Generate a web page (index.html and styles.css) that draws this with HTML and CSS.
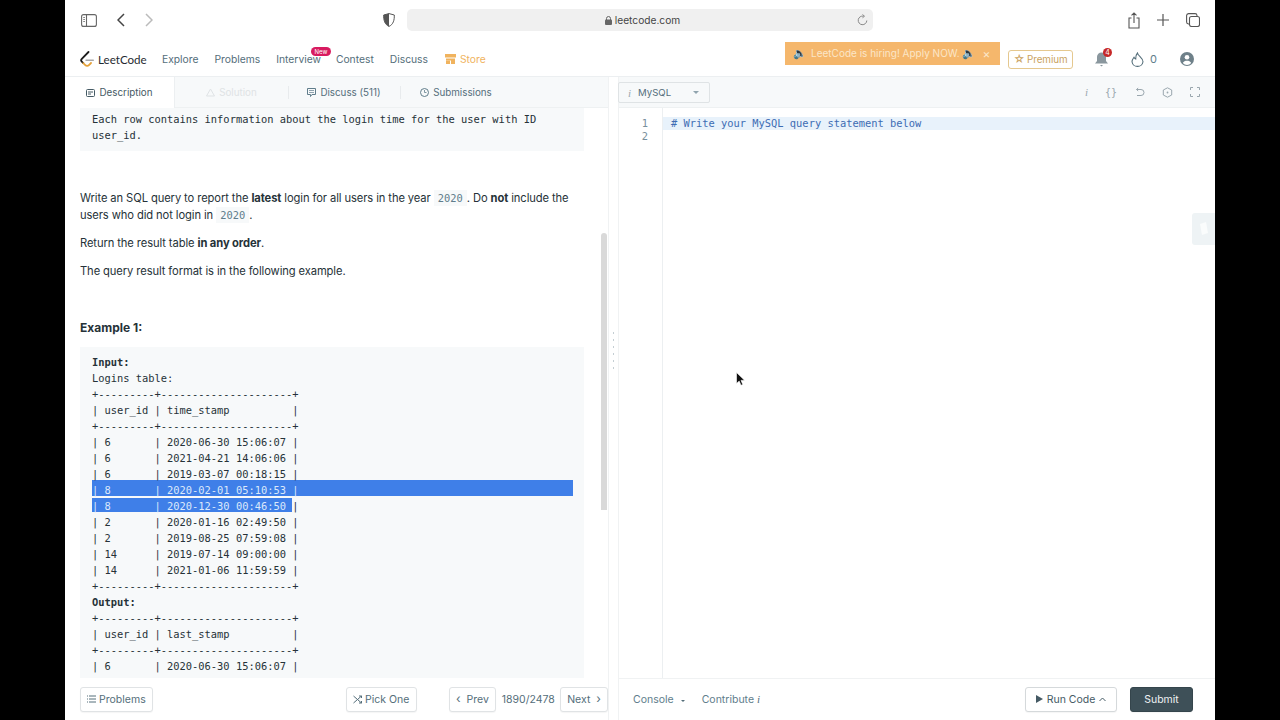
FILE: index.html
```html
<!DOCTYPE html>
<html lang="en">
<head>
<meta charset="utf-8">
<title>LeetCode</title>
<link rel="stylesheet" href="styles.css">
</head>
<body>
<div class="app">
  <header class="browser">
    <div class="browser-left">
      <svg class="sidebar" width="16" height="13" viewBox="0 0 16 13"><rect x=".6" y=".6" width="14.8" height="11.8" rx="2" fill="none" stroke="#666" stroke-width="1.1"/><path d="M5.5 1v11" stroke="#666" stroke-width="1.1"/><path d="M2.2 3.5h1.8M2.2 5.5h1.8M2.2 7.5h1.8" stroke="#888"/></svg>
      <svg class="back" width="8" height="14" viewBox="0 0 8 14"><path d="M7 1 1 7l6 6" fill="none" stroke="#444" stroke-width="1.5"/></svg>
      <svg class="forward" width="8" height="14" viewBox="0 0 8 14"><path d="m1 1 6 6-6 6" fill="none" stroke="#bbb" stroke-width="1.5"/></svg>
    </div>
    <svg class="shield" width="12" height="14" viewBox="0 0 12 14"><path d="M6 .6 11.3 2c.2 5-1 9.500-5.300 11.400C1.700 11.500.5 7 .7 2Z" fill="#fff" stroke="#555"/><path d="M6 .6v12.800C1.700 11.500.5 7 .7 2Z" fill="#555"/></svg>
    <div class="url">
      <span class="url-text"><svg width="7" height="9" viewBox="0 0 7 9"><rect y="3.500" width="7" height="5.500" rx="1" fill="#666"/><path d="M1.500 4V2.500a2 2 0 0 1 4 0V4" fill="none" stroke="#666"/></svg>leetcode.com</span>
      <svg class="reload" width="11" height="12" viewBox="0 0 11 12"><path d="M6.500 2.200A4.300 4.300 0 1 0 9.800 6.500M5.500.5l2 1.700-2 1.600" fill="none" stroke="#888"/></svg>
    </div>
    <div class="browser-right">
      <svg width="12" height="17" viewBox="0 0 12 17"><path d="M3.500 6H1v10h10V6H8.500M6 11V1M3.500 3.300 6 1l2.500 2.300" fill="none" stroke="#555" stroke-width="1.1"/></svg>
      <svg width="12" height="12" viewBox="0 0 12 12"><path d="M6 0v12M0 6h12" stroke="#555" stroke-width="1.2"/></svg>
      <svg width="14" height="14" viewBox="0 0 14 14"><rect x="3.500" y="3.500" width="10" height="10" rx="2" fill="none" stroke="#555" stroke-width="1.1"/><path d="M3 11H2.500A2 2 0 0 1 .6 9V2.500A2 2 0 0 1 2.500.6H9A2 2 0 0 1 11 2.500V3" fill="none" stroke="#555" stroke-width="1.1"/></svg>
    </div>
  </header>

  <nav class="nav">
    <div class="brand">
      <svg class="logo" width="14" height="17" viewBox="0 0 14 17"><path d="M8.500 1 1.800 7.800a2 2 0 0 0 0 2.800l1.500 1.500" fill="none" stroke="#1c1c1c" stroke-width="1.800" stroke-linecap="round"/><path d="M6 9.200h7.300" stroke="#a8a8a8" stroke-width="1.400" stroke-linecap="round"/><path d="M3.300 12.100 5 13.800a3 3 0 0 0 4.200 0l1.800-1.800" fill="none" stroke="#e5a23a" stroke-width="1.800" stroke-linecap="round"/></svg>
      <span class="brand-name">LeetCode</span>
    </div>
    <a>Explore</a>
    <a>Problems</a>
    <a class="interview">Interview<span class="new-badge">New</span></a>
    <a>Contest</a>
    <a>Discuss</a>
    <a class="store"><svg width="11" height="10" viewBox="0 0 11 10"><path d="M0 0h11v3.500H0zM1 4.500h9V10H6V6.500H1z" fill="#f0b35e"/><path d="M1 6.500h4V10H1z" fill="#f0b35e"/></svg>Store</a>
    <div class="nav-right">
      <button class="premium"><span class="star">☆</span>Premium</button>
      <span class="bell"><svg width="15" height="16" viewBox="0 0 15 16"><path d="M7.500 1.500a4.500 4.500 0 0 1 4.500 4.500v4l2 2.500H1L3 10V6a4.500 4.500 0 0 1 4.500-4.500Z" fill="#8a979e"/><path d="M6 14h3l-1.500 1.500Z" fill="#8a979e"/></svg><span class="bell-count">4</span></span>
      <span class="fire"><svg width="13" height="15" viewBox="0 0 13 15"><path d="M6.500 1C7 4 12 6 12 9.700A5.400 5.400 0 0 1 6.500 14.400 5.400 5.400 0 0 1 1 9.700C1 7.700 2.300 6.300 3 5.300c.5 1 1 1.400 1.700 1.700C4.700 4.700 5 2.500 6.500 1Z" fill="none" stroke="#546e7a" stroke-width="1.100"/></svg>0</span>
      <svg class="avatar" width="14" height="14" viewBox="0 0 14 14"><circle cx="7" cy="7" r="7" fill="#6e8089"/><circle cx="7" cy="5.300" r="2.300" fill="#fff"/><path d="M2.800 11c.8-1.700 2.400-2.300 4.200-2.300s3.400.6 4.200 2.300A5.800 5.800 0 0 1 7 13a5.800 5.800 0 0 1-4.200-2Z" fill="#fff"/></svg>
    </div>
    <div class="banner"><span class="horn">🔈</span><span class="banner-text">LeetCode is hiring! Apply NOW.</span><span class="horn">🔈</span><span class="banner-x">×</span></div>
  </nav>

  <main class="split">
    <section class="left">
      <div class="tabs">
        <div class="tab active"><svg width="9" height="8" viewBox="0 0 9 8"><rect x=".5" y=".5" width="8" height="7" rx="1" fill="none" stroke="#455a64"/><path d="M2 3h5M2 5h3" stroke="#455a64"/></svg>Description</div>
        <div class="tab disabled"><svg width="9" height="9" viewBox="0 0 9 9"><path d="M4.500 1 8.500 8H.5Z" fill="none" stroke="#dfe3e5"/></svg>Solution</div>
        <div class="tab"><svg width="9" height="9" viewBox="0 0 9 9"><path d="M.5.500h8v6H5L3.500 8.500v-2h-3Z" fill="none" stroke="#607d8b"/><path d="M2 2.500h5M2 4.500h5" stroke="#607d8b" stroke-width=".7"/></svg>Discuss (511)</div>
        <div class="tab"><svg width="9" height="9" viewBox="0 0 9 9"><circle cx="4.500" cy="4.500" r="4" fill="none" stroke="#607d8b"/><path d="M4.500 2v2.500h2" fill="none" stroke="#607d8b" stroke-width=".8"/></svg>Submissions</div>
      </div>
      <div class="content">
        <div class="scrollbar"></div>
        <pre class="code first">Each row contains information about the login time for the user with ID
user_id.</pre>
        <p class="para first-para">Write an SQL query to report the <b>latest</b> login for all users in the year <code>2020</code>. Do <b>not</b> include the users who did not login in <code>2020</code>.</p>
        <p class="para">Return the result table <b>in any order</b>.</p>
        <p class="para">The query result format is in the following example.</p>
        <p class="example">Example 1:</p>
        <pre class="code second"><b>Input:</b>
Logins table:
+---------+---------------------+
| user_id | time_stamp          |
+---------+---------------------+
| 6       | 2020-06-30 15:06:07 |
| 6       | 2021-04-21 14:06:06 |
| 6       | 2019-03-07 00:18:15 |
<span class="sel-row">| 8       | 2020-02-01 05:10:53 |</span><span class="sel-row short">| 8       | 2020-12-30 00:46:50 <span class="plain">|</span></span>| 2       | 2020-01-16 02:49:50 |
| 2       | 2019-08-25 07:59:08 |
| 14      | 2019-07-14 09:00:00 |
| 14      | 2021-01-06 11:59:59 |
+---------+---------------------+
<b>Output:</b>
+---------+---------------------+
| user_id | last_stamp          |
+---------+---------------------+
| 6       | 2020-06-30 15:06:07 |</pre>
      </div>
      <footer class="left-foot">
        <button class="btn problems"><svg width="9" height="8" viewBox="0 0 9 8"><path d="M0 1h1M2 1h7M0 4h1M2 4h7M0 7h1M2 7h7" stroke="#546e7a"/></svg>Problems</button>
        <button class="btn pick"><svg width="9" height="9" viewBox="0 0 9 9"><path d="m.5 1 8 7M.5 8l8-7M6 1h2.500v2M6 8h2.500V6" fill="none" stroke="#546e7a"/></svg>Pick One</button>
        <button class="btn prev"><span class="chev">‹</span>Prev</button>
        <span class="count">1890/2478</span>
        <button class="btn next">Next<span class="chev">›</span></button>
      </footer>
    </section>

    <div class="handle"><span></span><span></span><span></span><span></span><span></span><span></span></div>

    <section class="right">
      <div class="editor-bar">
        <div class="lang"><i class="info">i</i><span class="lang-name">MySQL</span><span class="caret"></span></div>
        <div class="tools">
          <i class="info">i</i>
          <span class="braces">{}</span>
          <svg width="11" height="10" viewBox="0 0 11 10"><path d="M2.500 2.500H7a3 3 0 0 1 0 6H3M2.500 2.500 4.200 1M2.500 2.500 4.200 4" fill="none" stroke="#9aa7ae"/></svg>
          <svg width="11" height="11" viewBox="0 0 11 11"><path d="M5.500.8 9.700 3v5L5.500 10.200 1.300 8V3Z" fill="none" stroke="#9aa7ae"/><circle cx="5.500" cy="5.500" r=".9" fill="#9aa7ae"/></svg>
          <svg width="10" height="10" viewBox="0 0 10 10"><path d="M.5 3V.5H3M7 .5h2.500V3M9.500 7v2.500H7M3 9.500H.5V7" fill="none" stroke="#9aa7ae"/></svg>
        </div>
      </div>
      <div class="editor">
        <div class="gutter"><span>1</span><span>2</span></div>
        <div class="lines">
          <div class="line current"># Write your MySQL query statement below</div>
          <div class="line"></div>
        </div>
        <div class="side-tab"><svg width="12" height="16" viewBox="0 0 12 16"><path d="M2 3l6-2 2 11-6 2z" fill="#fafcfc"/></svg></div>
      </div>
      <footer class="right-foot">
        <span class="link">Console<span class="caret small"></span></span>
        <span class="link">Contribute <i class="info dark">i</i></span>
        <button class="btn run"><svg width="7" height="8" viewBox="0 0 7 8"><path d="M0 0v8l7-4Z" fill="#455a64"/></svg>Run Code<svg width="7" height="5" viewBox="0 0 7 5"><path d="m.5 4 3-3 3 3" fill="none" stroke="#455a64"/></svg></button>
        <button class="btn submit">Submit</button>
      </footer>
    </section>
  </main>

  <svg class="cursor" width="9" height="14" viewBox="0 0 9 14"><path d="M.5.500v11l2.700-2.400 1.800 4.200 1.800-.8-1.800-4.100 3.500-.2Z" fill="#111" stroke="#fff" stroke-width=".6"/></svg>
</div>
</body>
</html>
```
FILE: styles.css
```css
* { box-sizing: border-box; }
html, body { margin: 0; height: 100%; overflow: hidden; background: #000; }
body { font-family: Inter, "Liberation Sans", sans-serif; color: #263238; }
button { font: inherit; }
p { margin: 0; }

.app {
  position: relative;
  width: 1150px;
  height: 720px;
  margin: 0 auto;
  background: #fff;
  display: flex;
  flex-direction: column;
  overflow: hidden;
}

.browser {
  height: 40px;
  flex: none;
  display: flex;
  align-items: center;
  padding: 0 15px 0 16px;
}
.browser-left { display: flex; align-items: center; width: 299px; flex: none; }
.back { margin-left: 20px; }
.forward { margin-left: 20px; }
.shield { flex: none; margin-left: 3px; }
.url {
  width: 466px;
  height: 22px;
  margin-left: 12px;
  border-radius: 5px;
  background: #f0f0f0;
  display: flex;
  align-items: center;
  justify-content: center;
  position: relative;
  font-size: 10.200px;
  color: #444;
}
.url-text { display: flex; align-items: center; gap: 3px; margin-left: 5px; }
.reload { position: absolute; right: 5px; top: 5px; }
.browser-right { margin-left: auto; display: flex; align-items: center; gap: 17px; }

.nav {
  position: relative;
  height: 37px;
  flex: none;
  display: flex;
  align-items: center;
  gap: 16px;
  padding: 2px 21px 0 15px;
  border-bottom: 1px solid #eceff1;
  font-size: 10.300px;
  color: #546e7a;
}
.brand { display: flex; align-items: center; gap: 4px; width: 66px; white-space: nowrap; }
.logo { flex: none; }
.brand-name { font-family: Lato, sans-serif; font-size: 11.600px; color: #1f2a30; font-weight: 400; }
.interview { position: relative; margin-right: -1px; }
.new-badge {
  position: absolute;
  right: -10px;
  top: -6px;
  width: 20px;
  height: 9px;
  border-radius: 5px;
  background: #d81b60;
  color: #fff;
  font-size: 6px;
  line-height: 9px;
  text-align: center;
}
.store { display: flex; align-items: center; gap: 4px; color: #f0b35e; margin-left: 1px; }
.nav-right { margin-left: auto; display: flex; align-items: center; }
.premium {
  width: 65px;
  height: 19px;
  padding: 0;
  border: 1px solid #e5c88f;
  border-radius: 3px;
  background: #fff;
  color: #c9a15d;
  font-size: 9.800px;
  display: flex;
  align-items: center;
  justify-content: center;
  gap: 2px;
}
.star { font-size: 11px; }
.bell { position: relative; display: flex; margin-left: 21px; }
.bell-count {
  position: absolute;
  left: 9px;
  top: -3px;
  width: 9px;
  height: 9px;
  border-radius: 50%;
  background: #c62828;
  color: #fff;
  font-size: 7px;
  line-height: 9px;
  text-align: center;
}
.fire { display: flex; align-items: center; gap: 6px; margin-left: 22px; font-size: 11px; color: #607d8b; }
.avatar { margin-left: 23px; }
.banner {
  position: absolute;
  left: 720px;
  top: 2px;
  width: 215px;
  height: 23px;
  background: #f5b76c;
  color: #fbe6c8;
  font-size: 10px;
  display: flex;
  align-items: center;
  padding: 0 0 1px 8px;
}
.horn { font-size: 11px; font-family: "DejaVu Sans", sans-serif; color: #6f7b80; width: 14px; flex: none; }
.banner-text { margin-left: 4px; margin-right: 2px; white-space: nowrap; }
.banner-x { margin-left: 7px; font-size: 12px; color: #fbe6c8; }

.split { flex: 1; min-height: 0; display: flex; }
.left { width: 544px; flex: none; display: flex; flex-direction: column; border-right: 1px solid #f0f2f3; }
.tabs {
  height: 31px;
  flex: none;
  display: flex;
  background: #f7f9fa;
  border-bottom: 1px solid #eef1f2;
  font-size: 9.800px;
  color: #546e7a;
}
.tab {
  width: 112px;
  display: flex;
  align-items: center;
  justify-content: center;
  gap: 4px;
  position: relative;
}
.tab + .tab::before {
  content: "";
  position: absolute;
  left: 0;
  top: 9px;
  height: 13px;
  border-left: 1px solid #e8ebed;
}
.tab.active { width: 110px; height: 31px; background: #fff; color: #455a64; border-right: 1px solid #eceff1; }
.tab.active + .tab::before { display: none; }
.tab.disabled { width: 113px; color: #dfe3e5; }

.content { position: relative; flex: 1; min-height: 0; overflow: hidden; padding: 0 24px 0 15px; font-size: 11.200px; letter-spacing: -.1px; line-height: 17px; }
.scrollbar { position: absolute; right: 1px; top: 125px; width: 6px; height: 277px; background: #d9d9d9; border-radius: 3px 3px 0 0; }
.code {
  margin: 0;
  padding: 3px 12px 0;
  background: #f7f9fa;
  font-family: "DejaVu Sans Mono", monospace;
  font-size: 10.400px;
  letter-spacing: 0;
  line-height: 16px;
  color: #263238;
}
.code.first { height: 43px; }
.code.second { margin-top: 11px; padding: 7px 12px 12px; }
.sel-row {
  display: block;
  height: 16px;
  margin-right: -1px;
  color: #dbe8fb;
  background: linear-gradient(#3f7fe8, #3f7fe8) no-repeat 0 -2px / 100% 16px;
}
.sel-row:first-of-type { box-shadow: 0 -2px 0 #3f7fe8; }
.sel-row.short { background: linear-gradient(#3f7fe8, #3f7fe8) no-repeat 0 -2px / 200px 16px; }
.plain { color: #263238; }
.para { margin-top: 11px; }
.first-para { margin-top: 39px; }
.para code { font-family: "DejaVu Sans Mono", monospace; font-size: 10.400px; letter-spacing: 0; background: #f7f9fa; padding: 2px 4px; color: #607d8b; }
.example { margin-top: 39px; font-weight: 700; font-size: 12px; letter-spacing: 0; }

.left-foot {
  height: 42px;
  flex: none;
  display: flex;
  align-items: center;
  padding: 0 0 0 15px;
  font-size: 10.500px;
  color: #455a64;
}
.btn {
  height: 25px;
  padding: 0;
  border: 1px solid #e0e3e5;
  border-radius: 3px;
  background: #fff;
  box-shadow: 0 1px 1px rgba(0,0,0,.04);
  color: #546e7a;
  font-size: 10.500px;
  display: flex;
  align-items: center;
  justify-content: center;
  gap: 3px;
}
.problems { width: 73px; }
.pick { width: 71px; margin-left: 193px; }
.prev { width: 48px; margin-left: 32px; gap: 6px; }
.next { width: 48px; gap: 6px; }
.count { width: 64px; text-align: center; color: #546e7a; }
.chev { font-size: 12px; line-height: 1; }

.handle {
  width: 9px;
  flex: none;
  display: flex;
  flex-direction: column;
  align-items: center;
  gap: 5px;
  padding-top: 255px;
}
.handle span { width: 1px; height: 2px; background: #c4ced3; }

.right { flex: 1; min-width: 0; display: flex; flex-direction: column; border-left: 1px solid #f0f2f3; }
.editor-bar {
  height: 31px;
  flex: none;
  display: flex;
  align-items: center;
  justify-content: space-between;
  background: #f7f9fa;
  border-bottom: 1px solid #eef1f2;
  padding-right: 15px;
}
.lang {
  width: 92px;
  height: 21px;
  margin-top: 1px;
  margin-left: -1px;
  display: flex;
  align-items: center;
  padding-left: 9px;
  background: #f7f9fa;
  border: 1px solid #dfe3e5;
  border-radius: 2px;
  font-size: 9.600px;
  color: #546e7a;
}
.lang-name { margin-left: 7px; }
.info { font-family: "Liberation Serif", serif; font-style: italic; color: #9aa7ae; font-size: 11px; }
.info.dark { color: #546e7a; }
.caret { margin-left: 22px; border: 3px solid transparent; border-top-color: #90a4ae; margin-top: 3px; }
.caret.small { margin-left: 7px; display: inline-block; vertical-align: -1px; border-width: 2.500px; border-top-color: #546e7a; }
.tools { display: flex; align-items: center; gap: 17px; }
.braces { font-size: 10px; font-family: "DejaVu Sans Mono", monospace; color: #9aa7ae; }

.editor { position: relative; flex: 1; min-height: 0; display: flex; font-family: "DejaVu Sans Mono", monospace; font-size: 10.400px; line-height: 13px; }
.gutter {
  width: 44px;
  flex: none;
  display: flex;
  flex-direction: column;
  padding: 9px 14px 0 0;
  text-align: right;
  color: #78909c;
  background: #fff;
  border-right: 1px solid #eceff1;
}
.lines { flex: 1; padding-top: 9px; }
.line { height: 13px; padding-left: 8px; color: #3d6cb3; }
.line.current { background: #e8f2fb; }
.side-tab {
  position: absolute;
  right: 0;
  top: 105px;
  width: 23px;
  height: 32px;
  background: #eef3f5;
  display: flex;
  align-items: center;
  justify-content: center;
  border-radius: 3px 0 0 3px;
}

.right-foot {
  height: 42px;
  flex: none;
  display: flex;
  align-items: center;
  padding: 0 22px 1px 14px;
  border-top: 1px solid #f0f2f3;
  font-size: 10.500px;
  color: #607d8b;
}
.link + .link { margin-left: 17px; }
.run { width: 92px; margin-left: auto; gap: 4px; color: #455a64; border-color: #d5d9db; }
.submit { width: 63px; margin-left: 13px; background: #3e5058; border-color: #35454c; color: #eef2f3; }

.cursor { position: absolute; left: 671px; top: 372px; }
```
